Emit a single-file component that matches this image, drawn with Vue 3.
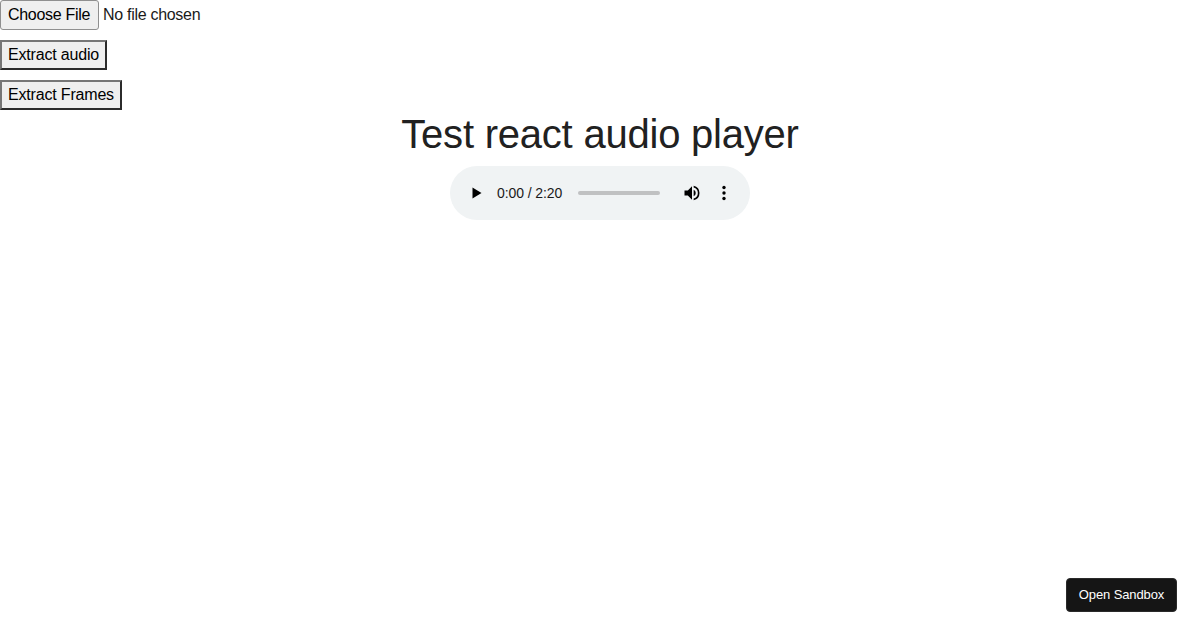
<template>
  <div class="page">
    <div class="tools">
      <input type="file" class="file" />
      <button type="button" class="action">Extract audio</button>
      <button type="button" class="action">Extract Frames</button>
    </div>

    <div class="player-wrap">
      <h1 class="title">Test react audio player</h1>
      <div class="player">
        <svg class="play" width="24" height="24" viewBox="0 0 24 24" fill="#000"><path d="M8.5 6.5v11l9-5.5z" /></svg>
        <span class="time">0:00 / 2:20</span>
        <div class="track"></div>
        <svg class="volume" width="20" height="20" viewBox="0 0 24 24" fill="#000"><path d="M3 9v6h4l5 5V4L7 9H3zm13.5 3A4.5 4.5 0 0 0 14 7.97v8.05A4.5 4.5 0 0 0 16.5 12z" /><path d="M14 3.23v2.06a7 7 0 0 1 0 13.42v2.06a9 9 0 0 0 0-17.54z" /></svg>
        <svg class="more" width="24" height="24" viewBox="0 0 24 24" fill="#000"><circle cx="12" cy="6.5" r="1.7" /><circle cx="12" cy="12" r="1.7" /><circle cx="12" cy="17.5" r="1.7" /></svg>
      </div>
    </div>

    <button type="button" class="sandbox">Open Sandbox</button>
  </div>
</template>

<script setup>
</script>

<style>
body {
  background: #fff;
  overflow: hidden;
}
</style>

<style scoped>
.page {
  font-family: "Liberation Sans", Arial, sans-serif;
}

.tools {
  display: flex;
  flex-direction: column;
  align-items: flex-start;
  gap: 10px;
}

.file {
  font: 16px "Liberation Sans", Arial, sans-serif;
  letter-spacing: -0.3px;
  height: 30px;
  color: #1a1a1a;
}

.file::file-selector-button {
  font: inherit;
  letter-spacing: -0.3px;
  height: 30px;
  padding: 0 8px 0 7px;
  margin-right: 4px;
  color: #000;
  background: #efefef;
  border: 1px solid #8f8f8f;
  border-radius: 3px;
}

.action {
  height: 30px;
  padding: 0 6px;
  font: 16px "Liberation Sans", Arial, sans-serif;
  letter-spacing: -0.18px;
  color: #000;
  background: #efefef;
  border: 2px solid;
  border-color: #767676 #2b2b2b #2b2b2b #767676;
}

.player-wrap {
  display: flex;
  flex-direction: column;
  align-items: center;
}

.title {
  margin: 0;
  height: 56px;
  line-height: 48px;
  font-size: 40px;
  font-weight: 400;
  letter-spacing: -0.22px;
  color: #212121;
}

.player {
  width: 300px;
  height: 54px;
  box-sizing: border-box;
  display: flex;
  align-items: center;
  padding: 0 12px 0 15px;
  background: #f0f3f4;
  border-radius: 27px;
}

.play {
  margin-left: -1px;
  margin-right: 1px;
}

.time {
  margin-left: 8px;
  font-size: 14px;
  color: #1a1a1a;
  white-space: nowrap;
  letter-spacing: -0.1px;
}

.track {
  width: 82px;
  height: 4px;
  margin-left: 16px;
  background: #c0c1c2;
  border-radius: 2px;
}

.volume {
  margin-left: 22px;
}

.more {
  margin-left: 10px;
}

.sandbox {
  position: fixed;
  right: 23px;
  bottom: 18px;
  width: 111px;
  height: 34px;
  padding: 0 0 2px;
  font: 13px "Liberation Sans", Arial, sans-serif;
  letter-spacing: -0.12px;
  color: #fff;
  background: #151515;
  border: 1px solid #2a2a2a;
  border-radius: 4px;
}
</style>
